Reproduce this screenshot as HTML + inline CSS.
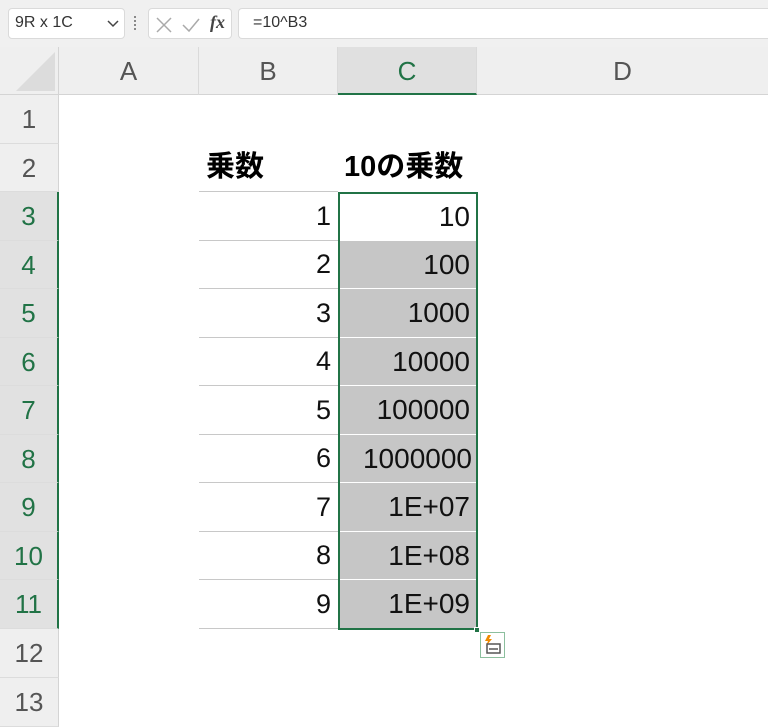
<!DOCTYPE html>
<html><head><meta charset="utf-8"><style>
*{margin:0;padding:0;box-sizing:border-box}
body{width:768px;height:693px;overflow:hidden;background:#fff;font-family:"Liberation Sans","Noto Sans CJK JP",sans-serif;position:relative}
.a{position:absolute}
.top{left:0;top:0;width:768px;height:47px;background:#f0f0f0}
.box{background:#fff;border:1px solid #dadada;border-radius:4px;height:31px;top:8px}
.ch{top:47px;height:48px;background:#efefef;border-right:1px solid #dadada;border-bottom:1px solid #d4d4d4;font-size:26px;color:#555;text-align:center;line-height:48px}
.rh{left:0;width:59px;background:#efefef;border-bottom:1px solid #dcdcdc;border-right:1px solid #d4d4d4;font-size:26px;color:#555;text-align:center}
.sel{background:#e1e1e1;color:#217346;border-right:2px solid #217346}
.b{left:199px;width:139px;border-bottom:1px solid #c8c8c8;text-align:right;padding-right:7px;font-size:27px;color:#111}
.c{left:339px;width:137px;background:#c6c6c6;text-align:right;padding-right:6px;font-size:28px;color:#111;border-bottom:1px solid #fff}
</style></head><body>
<div class="a top"></div>
<div class="a box" style="left:8px;width:117px"><span class="a" style="left:6px;top:5px;font-size:16px;color:#333">9R x 1C</span>
<svg class="a" style="left:98px;top:11px" width="12" height="8"><path d="M1 1l5 5 5-5" stroke="#444" stroke-width="1.5" fill="none"/></svg></div>
<div class="a" style="left:134px;top:16px;width:3px;height:14px;border-left:2px dotted #888"></div>
<div class="a box" style="left:148px;width:84px">
<svg class="a" style="left:6px;top:7px" width="18" height="18"><path d="M2 2l14 14M16 2L2 16" stroke="#aaa" stroke-width="1.5"/></svg>
<svg class="a" style="left:32px;top:7px" width="20" height="18"><path d="M2 9l6 6L18 3" stroke="#aaa" stroke-width="1.5" fill="none"/></svg>
<span class="a" style="left:61px;top:3px;font:italic bold 18px 'Liberation Serif',serif;color:#444">fx</span></div>
<div class="a box" style="left:238px;width:540px;border-right:none"><span class="a" style="left:14px;top:5px;font-size:16px;color:#333">=10^B3</span></div>
<div class="a" style="left:0;top:47px;width:59px;height:48px;background:#efefef;border-right:1px solid #d4d4d4;border-bottom:1px solid #d4d4d4"></div>
<svg class="a" style="left:14px;top:52px" width="42" height="40"><path d="M41 0V39H2Z" fill="#dcdcdc"/></svg>
<div class="a ch" style="left:59px;width:140px">A</div>
<div class="a ch" style="left:199px;width:139px">B</div>
<div class="a ch" style="left:338px;width:139px;background:#e0e0e0;color:#217346;border-bottom:2px solid #217346">C</div>
<div class="a ch" style="left:477px;width:291px;border-right:none">D</div>
<div class="a rh" style="top:95px;height:49px;line-height:49px">1</div>
<div class="a rh" style="top:144px;height:48px;line-height:48px">2</div>
<div class="a rh sel" style="top:192px;height:49px;line-height:49px">3</div>
<div class="a rh sel" style="top:241px;height:48px;line-height:48px">4</div>
<div class="a rh sel" style="top:289px;height:49px;line-height:49px">5</div>
<div class="a rh sel" style="top:338px;height:48px;line-height:48px">6</div>
<div class="a rh sel" style="top:386px;height:49px;line-height:49px">7</div>
<div class="a rh sel" style="top:435px;height:48px;line-height:48px">8</div>
<div class="a rh sel" style="top:483px;height:49px;line-height:49px">9</div>
<div class="a rh sel" style="top:532px;height:48px;line-height:48px">10</div>
<div class="a rh sel" style="top:580px;height:49px;line-height:49px">11</div>
<div class="a rh" style="top:629px;height:49px;line-height:49px">12</div>
<div class="a rh" style="top:678px;height:49px;line-height:49px">13</div>
<div class="a" style="left:206px;top:147px;font-size:29px;font-weight:bold;line-height:40px">乗数</div>
<div class="a" style="left:344px;top:147px;font-size:29px;font-weight:bold;line-height:40px">10の乗数</div>
<div class="a b" style="top:144px;height:48px"></div>
<div class="a b" style="top:192px;height:49px;line-height:48px">1</div>
<div class="a b" style="top:241px;height:48px;line-height:47px">2</div>
<div class="a b" style="top:289px;height:49px;line-height:48px">3</div>
<div class="a b" style="top:338px;height:48px;line-height:47px">4</div>
<div class="a b" style="top:386px;height:49px;line-height:48px">5</div>
<div class="a b" style="top:435px;height:48px;line-height:47px">6</div>
<div class="a b" style="top:483px;height:49px;line-height:48px">7</div>
<div class="a b" style="top:532px;height:48px;line-height:47px">8</div>
<div class="a b" style="top:580px;height:49px;line-height:48px">9</div>
<div class="a c" style="top:193px;height:48px;line-height:47px;background:#fff">10</div>
<div class="a c" style="top:241px;height:48px;line-height:47px">100</div>
<div class="a c" style="top:289px;height:49px;line-height:48px">1000</div>
<div class="a c" style="top:338px;height:48px;line-height:47px">10000</div>
<div class="a c" style="top:386px;height:49px;line-height:48px">100000</div>
<div class="a c" style="top:435px;height:48px;line-height:47px;padding-right:4px">1000000</div>
<div class="a c" style="top:483px;height:49px;line-height:48px">1E+07</div>
<div class="a c" style="top:532px;height:48px;line-height:47px">1E+08</div>
<div class="a c" style="top:580px;height:49px;line-height:48px">1E+09</div>
<div class="a" style="left:338px;top:192px;width:140px;height:438px;border:2px solid #217346"></div>
<div class="a" style="left:474px;top:627px;width:6px;height:6px;background:#217346;border:1px solid #fff"></div>
<div class="a" style="left:480px;top:632px;width:25px;height:26px;border:1px solid #8cbf9e;background:#fff">
<svg width="23" height="24"><path d="M7 2l-3 6h3l-2 5 6-7H8l2-4z" fill="#f08a00"/><rect x="6" y="11" width="13" height="9" fill="none" stroke="#555" stroke-width="1.5"/><path d="M8 16h9" stroke="#555" stroke-width="1.5"/></svg></div>
</body></html>
